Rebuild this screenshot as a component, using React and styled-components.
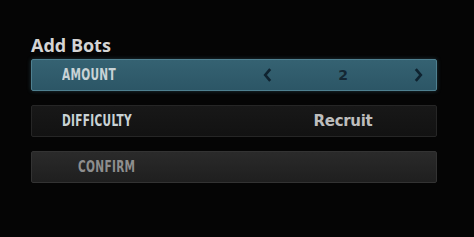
import React from "react"
import styled, { createGlobalStyle } from "styled-components"

const Global = createGlobalStyle`
  html, body {
    margin: 0;
    background: #050505;
  }
  body {
    width: 474px;
    height: 237px;
    overflow: hidden;
  }
`

export default function App() {
  return (
    <>
      <Global />
      <Panel>
        <Title>Add Bots</Title>
        <Row variant="active">
          <Label>
            <LabelText>AMOUNT</LabelText>
          </Label>
          <ValueArea>
            <Chevron viewBox="0 0 10 16" aria-hidden="true">
              <path d="M8 1.5 L2.5 8 L8 14.5" />
            </Chevron>
            <Value dark>2</Value>
            <Chevron viewBox="0 0 10 16" aria-hidden="true">
              <path d="M2 1.5 L7.5 8 L2 14.5" />
            </Chevron>
          </ValueArea>
        </Row>
        <Row>
          <Label>
            <LabelText>DIFFICULTY</LabelText>
          </Label>
          <ValueArea>
            <Value>Recruit</Value>
          </ValueArea>
        </Row>
        <Row variant="button">
          <Label indent={46}>
            <LabelText muted>CONFIRM</LabelText>
          </Label>
        </Row>
      </Panel>
    </>
  )
}

const Panel = styled.div`
  width: 406px;
  padding: 35px 0 0 31px;
  display: flex;
  flex-direction: column;
  gap: 14px;
`

const Title = styled.h1`
  margin: 0 0 -10px 0;
  font-family: "Open Sans", sans-serif;
  font-weight: 700;
  font-size: 18px;
  line-height: 20px;
  color: #d4d4d4;
`

const Row = styled.div`
  height: 32px;
  display: flex;
  align-items: center;
  box-sizing: border-box;
  border-radius: 2px;
  border: 1px solid
    ${(p) =>
      p.variant === "active" ? "#4f8090" : p.variant === "button" ? "#333333" : "#262626"};
  background: ${(p) =>
    p.variant === "active"
      ? "linear-gradient(180deg, #356272 0%, #2c5666 100%)"
      : p.variant === "button"
      ? "linear-gradient(180deg, #2a2a2a 0%, #1f1f1f 100%)"
      : "linear-gradient(180deg, #181818 0%, #121212 100%)"};
  box-shadow: ${(p) => (p.variant === "active" ? "0 0 4px rgba(80, 140, 160, 0.35)" : "none")};
`

const Label = styled.div`
  flex: 1;
  padding-left: ${(p) => p.indent || 30}px;
`

const LabelText = styled.span`
  display: inline-block;
  transform: scaleX(0.78);
  transform-origin: left center;
  font-family: "DejaVu Sans Condensed", "DejaVu Sans", sans-serif;
  font-weight: bold;
  font-size: 15px;
  letter-spacing: 0.4px;
  color: ${(p) => (p.muted ? "#8e8e8e" : "#c9d3d6")};
`

const ValueArea = styled.div`
  width: 160px;
  margin-right: 13px;
  display: flex;
  align-items: center;
  justify-content: space-between;
`

const Value = styled.span`
  flex: 1;
  text-align: center;
  font-family: "DejaVu Sans", sans-serif;
  font-weight: bold;
  font-size: ${(p) => (p.dark ? "14px" : "15px")};
  letter-spacing: ${(p) => (p.dark ? "0" : "-0.3px")};
  color: ${(p) => (p.dark ? "#142733" : "#bdbdbd")};
`

const Chevron = styled.svg`
  width: 9px;
  height: 16px;
  fill: none;
  stroke: #0f2330;
  stroke-width: 3;
  stroke-linejoin: miter;
`
